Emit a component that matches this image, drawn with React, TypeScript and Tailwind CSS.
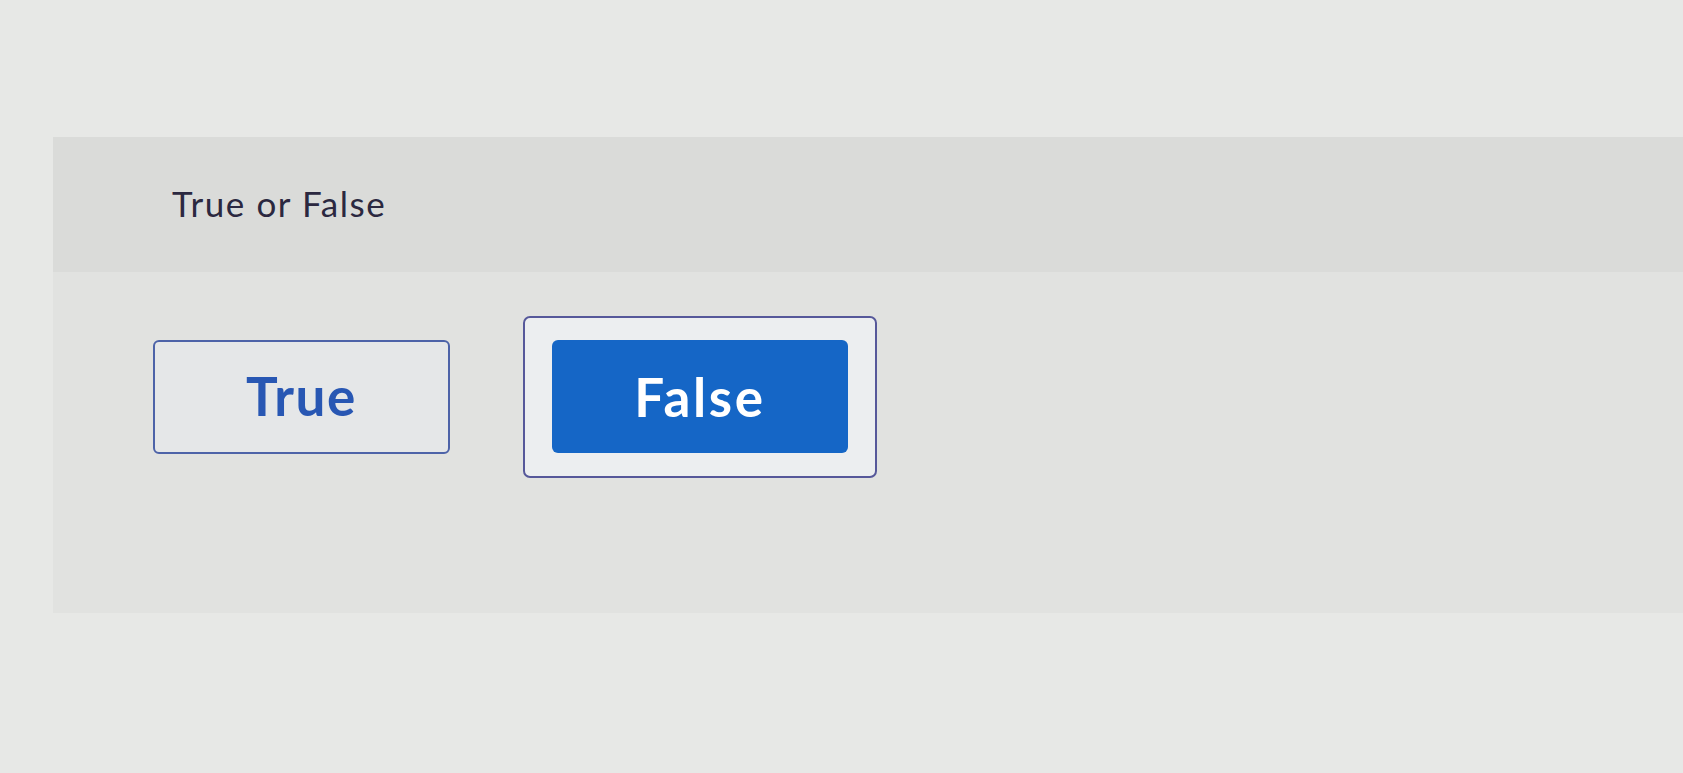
import { useState } from "react";

type Choice = "true" | "false";

const options: { value: Choice; label: string }[] = [
  { value: "true", label: "True" },
  { value: "false", label: "False" },
];

export default function App() {
  const [answer, setAnswer] = useState<Choice>("false");

  return (
    <div className="min-h-screen w-full bg-[#e7e8e6] pt-[137px] pl-[53px] font-['Lato',_'Open_Sans',_sans-serif]">
      <div className="w-full">
        <div className="h-[135px] bg-[#dadbd9] pl-[119px] flex items-center">
          <h2 className="text-[35px] tracking-[0.045em] text-[#2b2840] leading-none -mt-[2px]">True or False</h2>
        </div>

        <div className="h-[341px] bg-[#e1e2e0] pl-[100px] pt-[44px]">
          <div className="flex items-center gap-[73px]">
            {options.map((opt) =>
              answer === opt.value ? (
                <button
                  key={opt.value}
                  onClick={() => setAnswer(opt.value)}
                  className="rounded-[7px] border-2 border-[#56589a] bg-[#eceef0] px-[27px] py-[23px]"
                >
                  <span className="w-[296px] h-[113px] rounded-[6px] bg-[#1566c6] text-white text-[53px] font-bold tracking-[0.05em] flex items-center justify-center leading-none -mt-[1px]">
                    {opt.label}
                  </span>
                </button>
              ) : (
                <button
                  key={opt.value}
                  onClick={() => setAnswer(opt.value)}
                  className="w-[297px] h-[114px] rounded-[6px] border-2 border-[#4d63a8] bg-[#e5e7e8] flex items-center justify-center"
                >
                  <span className="text-[53px] font-bold tracking-[0.03em] text-[#2857b3] leading-none -mt-[4px]">
                    {opt.label}
                  </span>
                </button>
              )
            )}
          </div>
        </div>
      </div>
    </div>
  );
}
